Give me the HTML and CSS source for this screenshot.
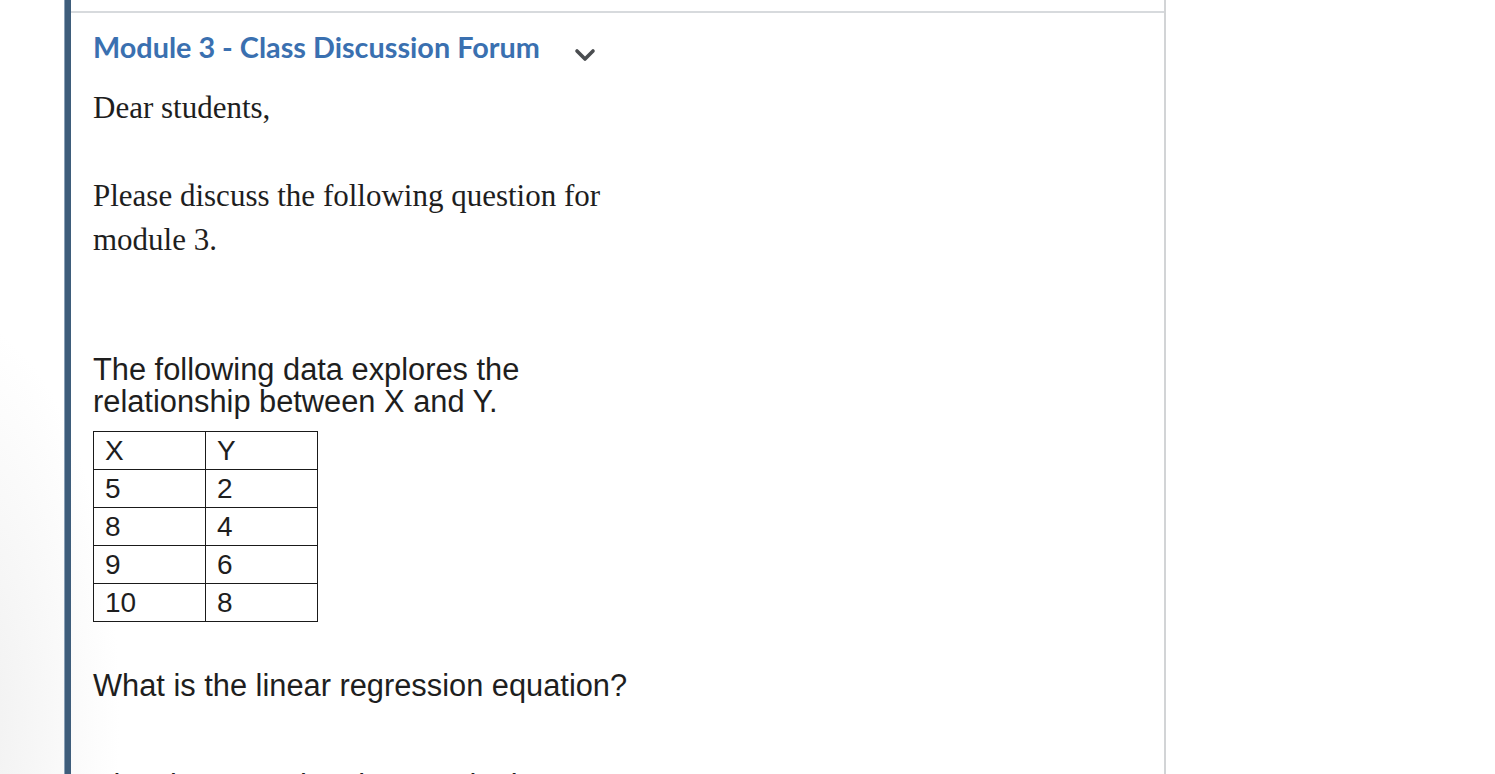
FILE: index.html
```html
<!DOCTYPE html>
<html>
<head>
<meta charset="utf-8">
<link rel="stylesheet" href="styles.css">
</head>
<body>
<div class="page">
  <div class="gutter"></div>
  <div class="bar"></div>
  <main class="panel">
    <div class="topline"></div>
    <div class="content">
      <div class="head">
        <h1 class="title">Module 3 - Class Discussion Forum</h1>
        <svg class="chev" width="22" height="14" viewBox="0 0 22 14"><path d="M3 3 L11 11 L19 3" fill="none" stroke="#4a4d50" stroke-width="3.6" stroke-linecap="round" stroke-linejoin="round"/></svg>
      </div>
      <p class="serif p1">Dear students,</p>
      <p class="serif p2">Please discuss the following question for<br>module 3.</p>
      <p class="sans p3">The following data explores the<br>relationship between X and Y.</p>
      <table class="data">
        <tr><td>X</td><td>Y</td></tr>
        <tr><td>5</td><td>2</td></tr>
        <tr><td>8</td><td>4</td></tr>
        <tr><td>9</td><td>6</td></tr>
        <tr><td>10</td><td>8</td></tr>
      </table>
      <p class="sans p4">What is the linear regression equation?</p>
      <p class="sans p5">Also, interpret the slope and y-intercept.</p>
    </div>
  </main>
  <div class="side"></div>
</div>
</body>
</html>
```
FILE: styles.css
```css
html, body {
  margin: 0;
  padding: 0;
  height: 100%;
  overflow: hidden;
}
body {
  background: radial-gradient(ellipse 160px 400px at -40px 720px, #efefef 0%, #ffffff 100%);
}
.page {
  display: flex;
  height: 774px;
}
.gutter {
  width: 64px;
  flex: none;
}
.bar {
  width: 7px;
  flex: none;
  background: #3e5d7b;
  border-left: 1px solid #8aa0b6;
  box-sizing: border-box;
}
.panel {
  width: 1093px;
  flex: none;
  border-right: 2px solid #d2d4d6;
  display: flex;
  flex-direction: column;
}
.topline {
  height: 11px;
  border-bottom: 2px solid #d7dadd;
  flex: none;
}
.content {
  padding-left: 22px;
}
.head {
  display: flex;
  align-items: center;
  margin-top: 17px;
  height: 34px;
}
.title {
  margin: 0;
  font-family: Lato, "Liberation Sans", sans-serif;
  font-weight: 700;
  font-size: 28.8px;
  color: #3a70b0;
}
.chev {
  margin-left: 34px;
  margin-top: 16px;
}
p { margin: 0; }
.serif {
  font-family: "Liberation Serif", "Times New Roman", serif;
  font-size: 31px;
  color: #1e1e1e;
  line-height: 44px;
}
.p1 { margin-top: 22px; }
.p2 { margin-top: 44px; }
.sans {
  font-family: "Liberation Sans", Arial, sans-serif;
  font-size: 30.8px;
  color: #1e1e1e;
  line-height: 32px;
}
.p3 { margin-top: 92px; }
.data {
  border-collapse: collapse;
  margin-top: 13px;
  font-family: "Liberation Sans", Arial, sans-serif;
  font-size: 28px;
  color: #1e1e1e;
}
.data td {
  border: 1.6px solid #1a1a1a;
  width: 100px;
  height: 37px;
  padding: 0 0 0 11px;
  line-height: 37px;
}
.p4 { margin-top: 48px; }
.p5 { margin-top: 68px; }
.side {
  flex: 1;
}
```
